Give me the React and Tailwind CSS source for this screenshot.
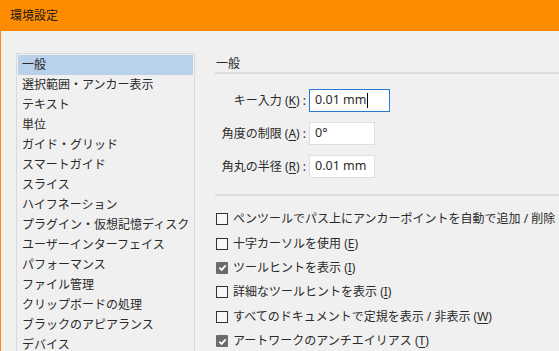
import React from 'react';

const categories = [
  '一般',
  '選択範囲・アンカー表示',
  'テキスト',
  '単位',
  'ガイド・グリッド',
  'スマートガイド',
  'スライス',
  'ハイフネーション',
  'プラグイン・仮想記憶ディスク',
  'ユーザーインターフェイス',
  'パフォーマンス',
  'ファイル管理',
  'クリップボードの処理',
  'ブラックのアピアランス',
  'デバイス',
];

const fields = [
  { label: 'キー入力', key: 'K', value: '0.01 mm', focused: true },
  { label: '角度の制限', key: 'A', value: '0°' },
  { label: '角丸の半径', key: 'R', value: '0.01 mm' },
];

const options = [
  { text: 'ペンツールでパス上にアンカーポイントを自動で追加 / 削除', checked: false },
  { text: '十字カーソルを使用', key: 'E', checked: false },
  { text: 'ツールヒントを表示', key: 'I', checked: true },
  { text: '詳細なツールヒントを表示', key: 'I', checked: false },
  { text: 'すべてのドキュメントで定規を表示 / 非表示', key: 'W', checked: false },
  { text: 'アートワークのアンチエイリアス', key: 'T', checked: true },
];

function Key({ k }) {
  return (
    <span>
      {' ('}
      <span className="underline underline-offset-2">{k}</span>
      {')'}
    </span>
  );
}

function Checkbox({ checked }) {
  if (checked) {
    return (
      <span className="w-[12px] h-[12px] bg-[#6b6b6b] rounded-[1px] flex items-center justify-center shrink-0">
        <svg width="9" height="9" viewBox="0 0 10 10">
          <path d="M1.5 5.2 L4 7.6 L8.6 2.6" fill="none" stroke="#fff" strokeWidth="2" />
        </svg>
      </span>
    );
  }
  return <span className="w-[12px] h-[12px] border border-[#333] bg-[#f7f7f7] shrink-0" />;
}

export default function App() {
  return (
    <div
      className="w-[559px] h-[351px] overflow-hidden bg-[#f0f0f0] border-l border-[#ff8c00] text-[12px] text-[#2a2a2a]"
      style={{ fontFamily: '"Noto Sans", "Noto Sans CJK JP", sans-serif' }}
    >
      <div className="h-[31px] bg-[#ff8c00] flex items-center pl-[9px] text-[#1a1a1a]">環境設定</div>

      <div className="flex pt-[22px] pl-[15px]">
        <div className="w-[179px] shrink-0 border border-[#d9d9d9] p-[1px] h-[320px]">
          {categories.map((c, i) => (
            <div
              key={c}
              className={`h-[20px] leading-[20px] pl-[4px] whitespace-nowrap ${i === 0 ? 'bg-[#b9d1ea]' : ''}`}
            >
              {c}
            </div>
          ))}
        </div>

        <div className="ml-[20px] flex-1 min-w-0">
          <div className="h-[21px] leading-[22px] border-b-2 border-[#dcdcdc] pl-[1px]">一般</div>

          <div className="mt-[15px] flex flex-col gap-[10px]">
            {fields.map((f) => (
              <div key={f.label} className="flex items-center">
                <div className="w-[94px] text-right pr-[3px] whitespace-nowrap">
                  {f.label}
                  <Key k={f.key} />
                  {' :'}
                </div>
                <div
                  className={`h-[23px] bg-white flex items-center pl-[5px] border ${
                    f.focused ? 'w-[81px] border-[#2a7ad5]' : 'w-[66px] border-[#dedede]'
                  }`}
                >
                  <span className="text-[12.5px]">{f.value}</span>
                  {f.focused && <span className="w-[1px] h-[15px] bg-black ml-[1px]" />}
                </div>
              </div>
            ))}
          </div>

          <div className="mt-[16px] border-b-2 border-[#dcdcdc]" />

          <div className="mt-[11px] flex flex-col">
            {options.map((o, i) => (
              <div key={i} className="h-[24.4px] flex items-center gap-[5px] pl-[1px] whitespace-nowrap">
                <Checkbox checked={o.checked} />
                <span>
                  {o.text}
                  {o.key && <Key k={o.key} />}
                </span>
              </div>
            ))}
          </div>
        </div>
      </div>
    </div>
  );
}
